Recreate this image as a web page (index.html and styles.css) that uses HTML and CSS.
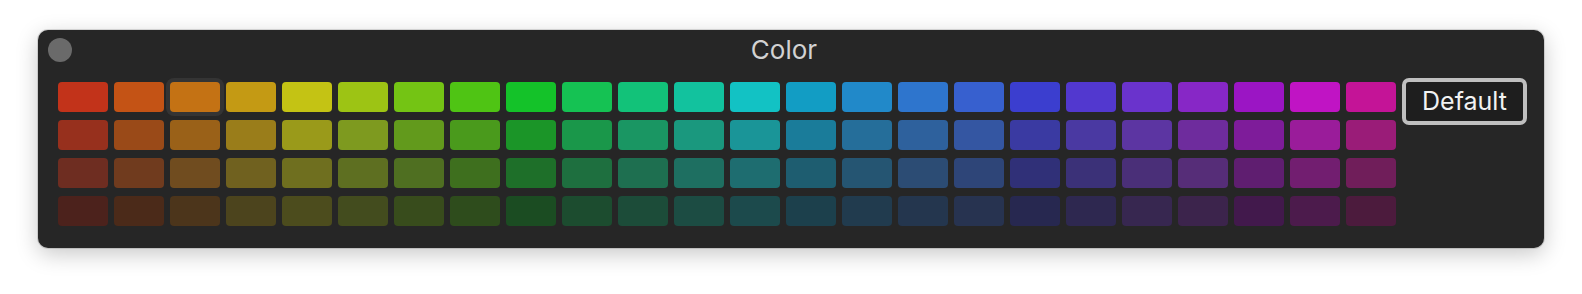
FILE: index.html
```html
<html>
  <head>
    <title>Color</title>
    <link rel="stylesheet" href="styles.css">
  </head>
  <body>
    <div class="panel">
      <div class="titlebar">
        <div class="close"></div>
        <div class="title">Color</div>
      </div>
      <div class="content">
        <div id="swatches" class="swatches"></div>
        <button class="default-btn">Default</button>
      </div>
    </div>
    <script>
    // four shade rows, 24 hues each
    let palette = [
      ["#c2331a","#c45315","#c47214","#c49a14","#c4c314","#9dc414","#74c414","#4fc414","#14c229","#15c253","#12c279","#12c29e","#12c2c4","#129dc4","#2189c9","#2e75cd","#3760cf","#3b3ecf","#5238cf","#6a33cc","#8727c6","#9b15c4","#c014c4","#c41497"],
      ["#97301d","#9a4a18","#9a6118","#9a7d1a","#9a9a1a","#7e9a1f","#629a1c","#4a9a1c","#1b9528","#1a974a","#1a9663","#1a987e","#1a9598","#1a7c9a","#256e9a","#2e619d","#3456a2","#3a3aa2","#4a39a2","#5c35a2","#6e2c9d","#7e1c9a","#9a1c9a","#9a1c78"],
      ["#6e2d21","#703b1e","#704c1f","#70611f","#6f6f1f","#5e6f21","#4f6f21","#3e6f1e","#1e6f29","#1e6f3f","#1e6f50","#1e6f61","#1e6d70","#1e5d70","#255572","#2c4c74","#2e4578","#303078","#3b3178","#4a2f78","#562d78","#5f1e70","#721e70","#701e5a"],
      ["#4c221c","#4b2a19","#4c351b","#4c441d","#4c4c1d","#434c1e","#384c1c","#2e4c1c","#1b4c22","#1c4c2f","#1c4c39","#1c4c43","#1c4a4c","#1c404c","#213b4e","#24364e","#273350","#272850","#2e2850","#372750","#3c244c","#42194c","#4c1b4c","#4c1b3d"]
    ];
    let grid = document.getElementById("swatches");
    palette.forEach(function(row, r) {
      row.forEach(function(color, c) {
        let sw = document.createElement("div");
        sw.className = "swatch";
        if (r == 0 && c == 2) {
          sw.className += " selected";
        }
        sw.style.background = color;
        grid.appendChild(sw);
      });
    });//end palette
    </script>
  </body>
</html>
```

FILE: styles.css
```css
body {
  margin: 0;
  background: #fff;
  font-family: Inter, "Liberation Sans", sans-serif;
}
.panel {
  margin: 30px 38px 0;
  height: 218px;
  box-sizing: border-box;
  background: #262626;
  border-radius: 10px;
  box-shadow: 0 0 0 1px rgba(0, 0, 0, 0.12), 0 6px 22px rgba(0, 0, 0, 0.22);
}
.titlebar {
  display: grid;
  height: 48px;
}
.close {
  grid-area: 1 / 1;
  justify-self: start;
  width: 24px;
  height: 24px;
  margin: 8px 0 0 10px;
  border-radius: 50%;
  background: #6a6a6a;
}
.title {
  grid-area: 1 / 1;
  justify-self: center;
  padding: 5px 14px 0 0;
  font-size: 26px;
  line-height: 30px;
  color: #d2d2d2;
}
.content {
  display: flex;
  align-items: flex-start;
  gap: 6px;
  padding: 0 17px 0 20px;
}
.swatches {
  display: grid;
  grid-template-columns: repeat(24, 50px);
  grid-auto-rows: 30px;
  column-gap: 6px;
  row-gap: 8px;
  margin-top: 4px;
}
.swatch {
  border-radius: 4px;
}
.selected {
  box-shadow: 0 0 0 4px #343434;
}
.default-btn {
  flex-shrink: 0;
  width: 125px;
  height: 47px;
  padding: 0 0 2px;
  border: 4px solid #bfbfbf;
  border-radius: 7px;
  background: #1e1e1e;
  color: #f2f2f2;
  font-family: Inter, "Liberation Sans", sans-serif;
  font-size: 25px;
}
```
